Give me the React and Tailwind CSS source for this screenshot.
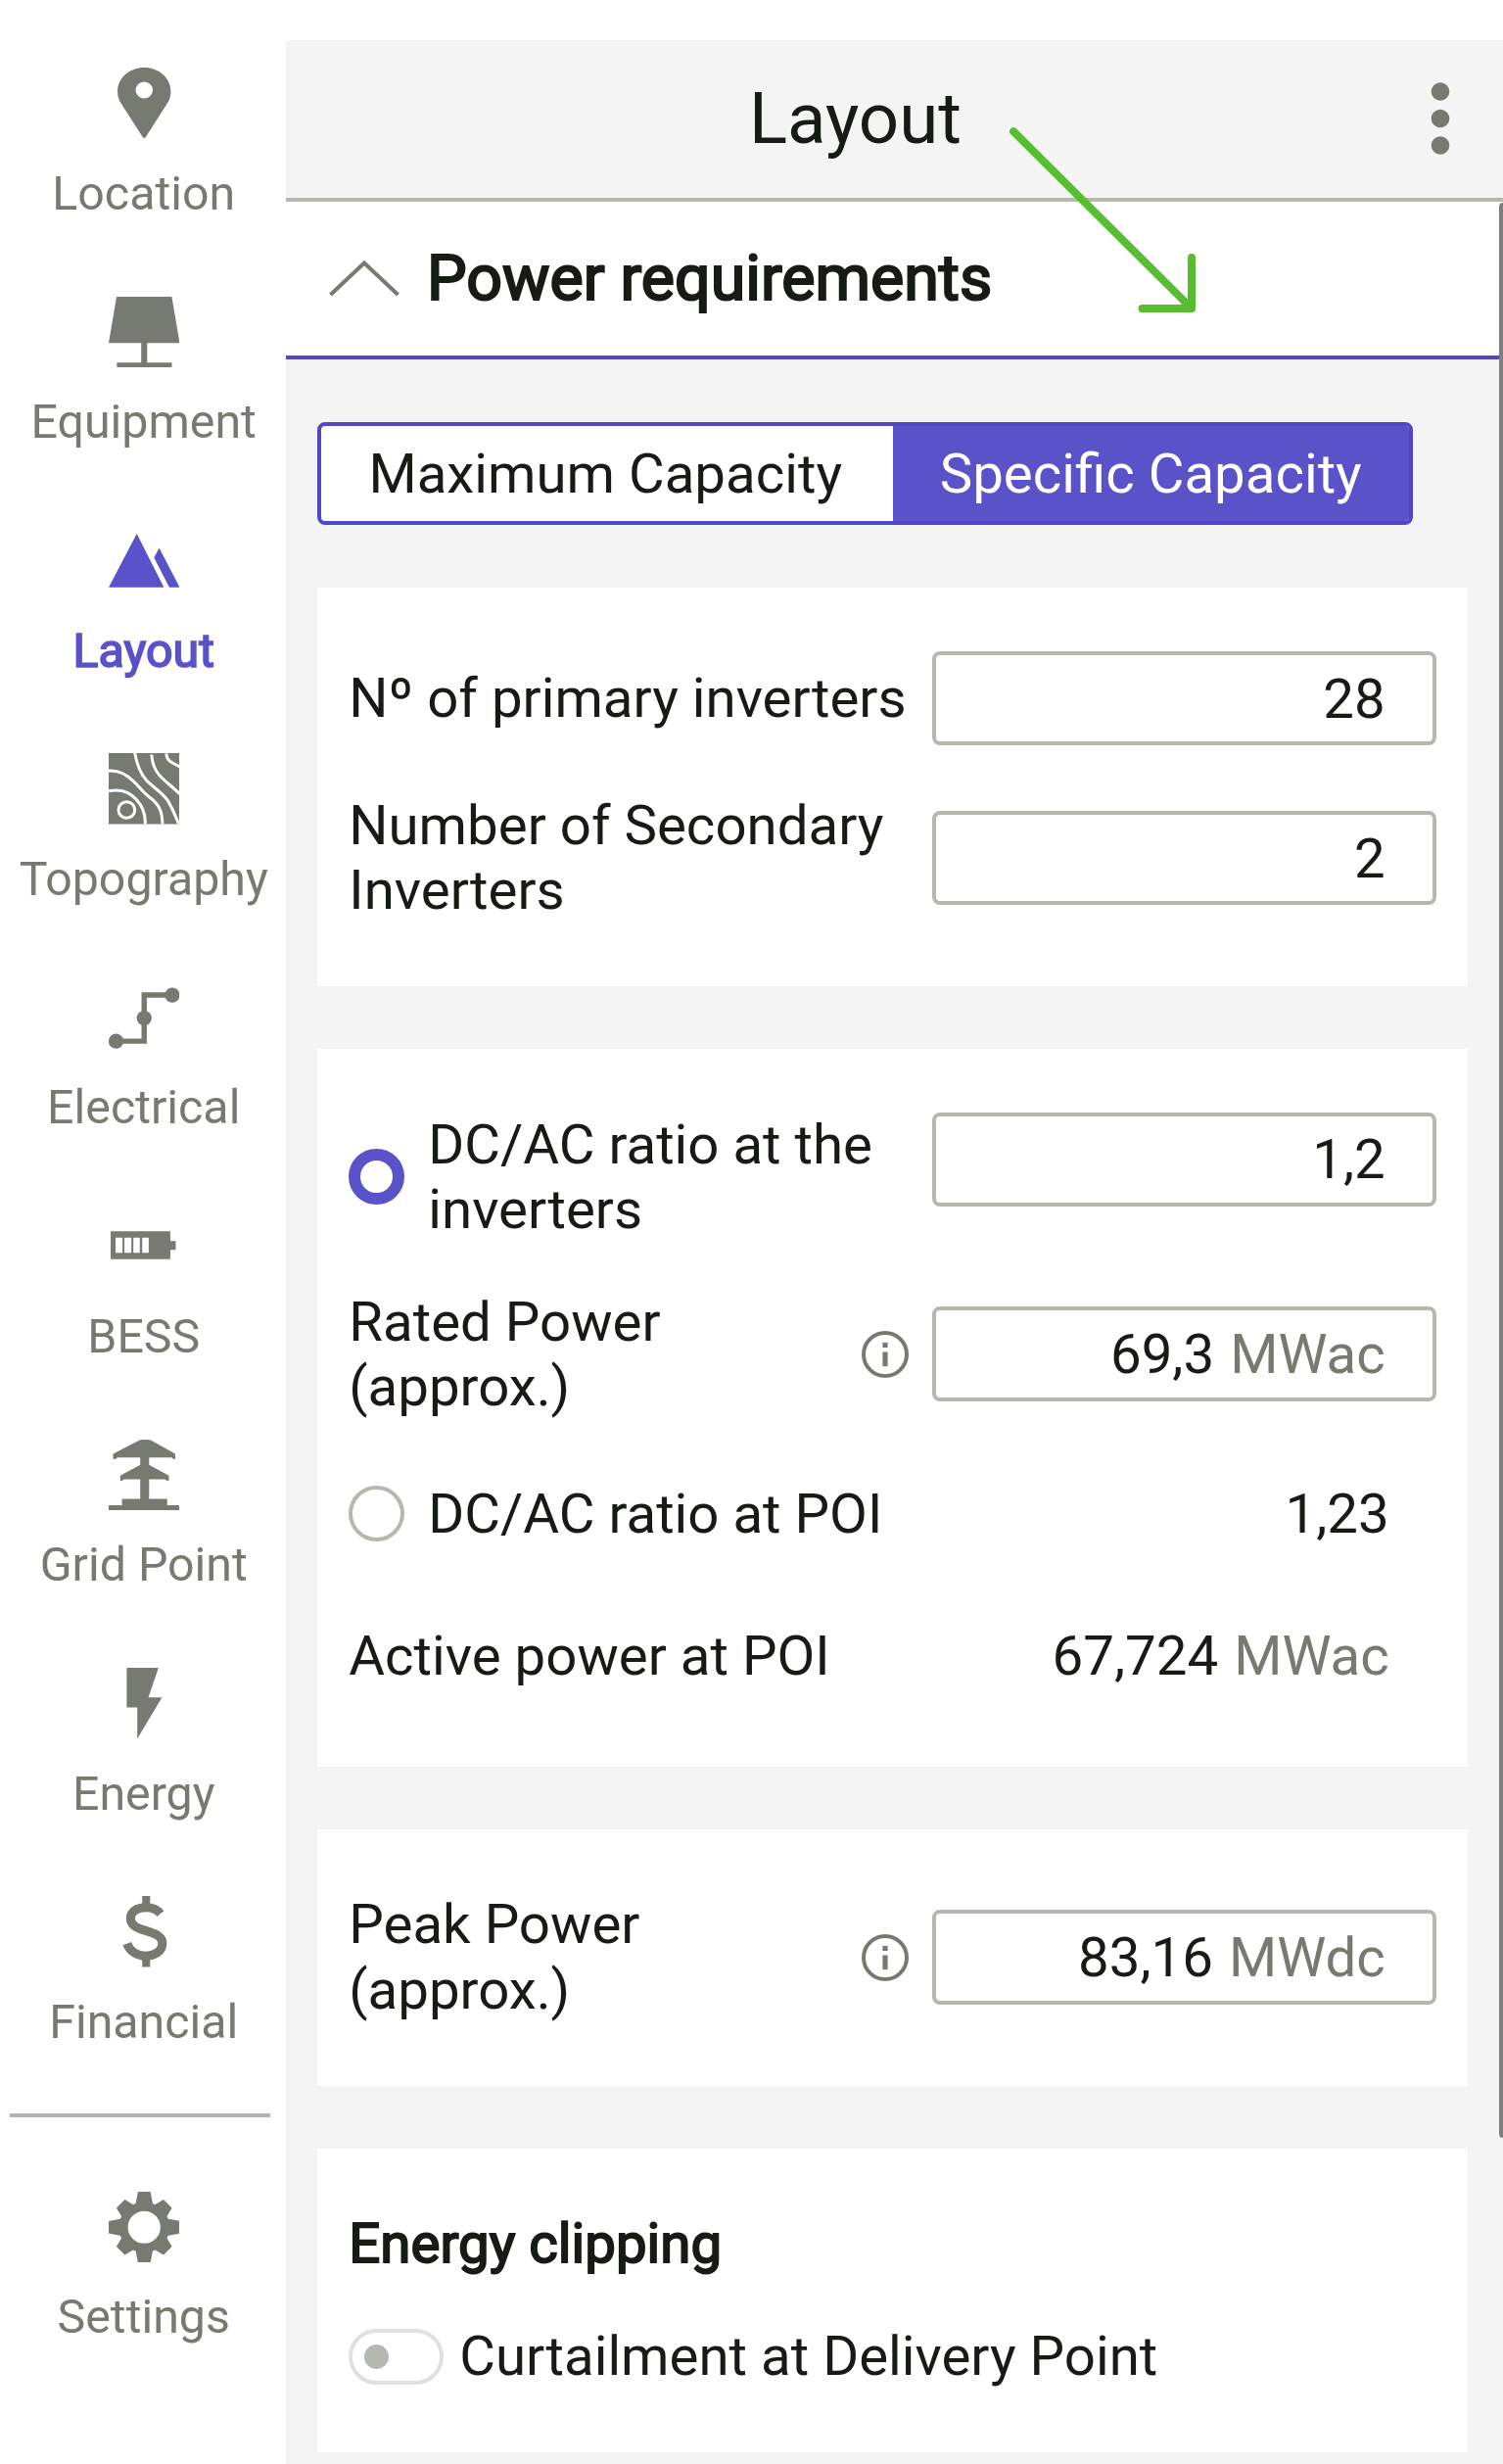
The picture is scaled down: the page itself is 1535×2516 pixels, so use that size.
const Icon = ({ children }) => (
  <svg viewBox="0 0 72 72" className="w-[72.5px] h-[72.5px] shrink-0" fill="currentColor">
    {children}
  </svg>
)

const PinIcon = () => (
  <Icon>
    <path fillRule="evenodd" d="M36 0C21 0 9 10.6 9 24.3c0 4.9 1.3 8.5 3.7 12.2L34.3 70.2q1.7 2.6 3.4 0L59.3 36.5C61.7 32.8 63 29.2 63 24.3 63 10.6 51 0 36 0zM36 14.3a8.7 8.5 0 1 1 0 17a8.7 8.5 0 1 1 0-17z" />
  </Icon>
)

const PanelIcon = () => (
  <Icon>
    <path d="M8 0H64L72 47H39V66.7H64V72H8.3V66.7H33V47H0z" />
  </Icon>
)

const MountainIcon = () => (
  <Icon>
    <path d="M28.5 9L56 63.3H0zM51.2 23.3L72 63.3H61.5L46 33.3z" />
  </Icon>
)

const TopographyIcon = () => (
  <Icon>
    <rect width="72" height="72" />
    <g fill="none" stroke="#fff" strokeWidth="3">
      <path d="M26.5 0C28.5 11 32 21 39 28.5C46 35 54 40 59.5 47.5C64.5 55 67.5 64 71 71.5" />
      <path d="M43.5 1.5C44 10 46 16 51 22C57 29 65 34 72 41.5" />
      <path d="M58.5 .5C58.5 4 60 6.5 62.5 8.5C66 11 69 12 72 14" />
      <path d="M0 18C10 17 18 21.5 25 28.5C31 34 35 40 41 44.5C50 51 54.5 58 54.5 72" />
      <path d="M0 38.5C12 36 21 39 28 47C34.5 54 37.5 62 37 72" />
      <circle cx="18.2" cy="57.6" r="8.3" />
    </g>
  </Icon>
)

const CircuitIcon = () => (
  <Icon>
    <path d="M7.5 59.7H36V13H64.5" fill="none" stroke="currentColor" strokeWidth="5.4" />
    <circle cx="64.5" cy="13" r="7.6" />
    <circle cx="36" cy="36.3" r="7.6" />
    <circle cx="7.5" cy="59.7" r="7.6" />
  </Icon>
)

const BatteryIcon = () => (
  <Icon>
    <path d="M2 21H62.5V31H68V40H62.5V49.5H2z" />
    <path fill="#fff" d="M7 27.5h7v15.5h-7zM16 27.5h7v15.5h-7zM25 27.5h6.6v15.5h-6.6zM34 27.5h6.6v15.5h-6.6z" />
  </Icon>
)

const PylonIcon = () => (
  <Icon>
    <path d="M31.5 .6Q36-.8 42.5 .6L67.5 14.5V19.5Q65.5 20.5 64 18H41V25.5L61 36.5V41.5Q59 42.5 57.3 40.3H41V60H59.3V66.5H72V72H0V66.5H13.5V60H32V40.3H15.5Q13.5 42.5 11.7 41.5V36.5L32 25.5V18H9Q7 20.5 4.5 19.5V14.5z" />
  </Icon>
)

const BoltIcon = () => (
  <Icon>
    <path d="M18.3 0H50.5L40.3 30H54L29 72V40.3H18.3z" />
  </Icon>
)

const DollarIcon = () => (
  <Icon>
    <path d="M34 0h8v11h-8zM34 61h8v11h-8z" />
    <path
      d="M52.5 18C49 13.5 43.5 11.7 38 11.7C28.5 11.7 22.2 16 22.2 22.5C22.2 29.5 28 32.2 37.5 35.2C48 38.5 54.5 41 54.5 48C54.5 56 46.5 60.8 37.5 60.8C28.5 60.8 21.5 56 18.6 48.3"
      fill="none" stroke="currentColor" strokeWidth="9"
    />
  </Icon>
)

const GearIcon = () => (
  <Icon>
    <circle cx="36" cy="36" r="21" fill="none" stroke="currentColor" strokeWidth="9" />
    {[0, 90, 180, 270].map(a => (
      <path key={a} d="M29.7 0H42.3L45 14H27z" transform={`rotate(${a} 36 36)`} />
    ))}
    {[45, 135, 225, 315].map(a => (
      <path key={a} d="M30 2.2H42L45 14H27z" transform={`rotate(${a} 36 36)`} />
    ))}
  </Icon>
)

const InfoIcon = () => (
  <svg viewBox="0 0 48 48" className="w-[48px] h-[48px] shrink-0 text-[#767a70]" fill="currentColor">
    <circle cx="24" cy="24" r="22" fill="none" stroke="currentColor" strokeWidth="4" />
    <rect x="21.4" y="12" width="5.2" height="5" />
    <rect x="21.4" y="21.5" width="5.2" height="14.5" />
  </svg>
)

const navItems = [
  { label: 'Location', icon: PinIcon },
  { label: 'Equipment', icon: PanelIcon },
  { label: 'Layout', icon: MountainIcon, active: true },
  { label: 'Topography', icon: TopographyIcon },
  { label: 'Electrical', icon: CircuitIcon },
  { label: 'BESS', icon: BatteryIcon },
  { label: 'Grid Point', icon: PylonIcon },
  { label: 'Energy', icon: BoltIcon },
  { label: 'Financial', icon: DollarIcon },
]

const NavItem = ({ label, icon: NavIcon, active }) => (
  <a className={`flex flex-col items-center gap-[28px] whitespace-nowrap text-[48.3px] leading-[56.8px] ${active ? 'text-[#5a52c8] [-webkit-text-stroke:1.7px_#5a52c8]' : 'text-[#767a70]'}`}>
    <NavIcon />
    {label}
  </a>
)

const Card = ({ children }) => (
  <section className="flex flex-col gap-[48.4px] bg-white px-[32.3px] py-[64.5px]">{children}</section>
)

const Row = ({ label, info, top, children }) => (
  <div className={`flex justify-between ${top ? 'items-start' : 'items-center'}`}>
    <div className="whitespace-nowrap">{label}</div>
    <div className="flex items-center gap-[24.5px]">
      {info && <InfoIcon />}
      {children}
    </div>
  </div>
)

const Field = ({ value, unit }) => (
  <div className="flex h-[96.7px] w-[514.5px] items-center justify-end gap-[16px] rounded-[8px] border-4 border-[#b4b9af] bg-white pt-[1.5px] pr-[48px]">
    {value}
    {unit && <span className="text-[#767a70]">{unit}</span>}
  </div>
)

const Value = ({ value, unit }) => (
  <div className="flex h-[96.7px] items-center gap-[16px] pt-px pr-[48px]">
    {value}
    {unit && <span className="text-[#767a70]">{unit}</span>}
  </div>
)

const Radio = ({ checked, children }) => (
  <label className="flex items-center gap-[24px]">
    <span className={`h-[57px] w-[57px] shrink-0 rounded-full bg-white ${checked ? 'border-[12px] border-[#5a52c8]' : 'border-4 border-[#b4b9af]'}`} />
    <span>{children}</span>
  </label>
)

export default function App() {
  return (
    <div className="relative flex h-[2516px] w-[1535px] overflow-hidden bg-white pt-[41px] font-[Roboto,sans-serif] text-[56.4px] leading-[66.3px] text-[#171b15]">
      <nav className="flex w-[292px] shrink-0 flex-col pt-[28.3px] pl-[1.5px]">
        <div className="flex flex-col gap-[76.1px]">
          {navItems.map(item => <NavItem key={item.label} {...item} />)}
        </div>
        <hr className="mt-[64px] mb-[76px] ml-[8.5px] w-[265.5px] border-t-4 border-[#b1b6ab]" />
        <NavItem label="Settings" icon={GearIcon} />
      </nav>

      <main className="flex min-w-0 flex-1 flex-col bg-[#f4f4f4]">
        <header className="flex h-[164.7px] shrink-0 items-center border-b-4 border-[#b4b9af] pr-[46px]">
          <h1 className="flex-1 pl-[2px] text-center text-[72.6px] leading-[85px]">Layout</h1>
          <svg viewBox="0 0 36 76" className="h-[76px] w-[36px] fill-[#767a70]">
            <circle cx="18" cy="10.5" r="9.3" />
            <circle cx="18" cy="38" r="9.3" />
            <circle cx="18" cy="65.5" r="9.3" />
          </svg>
        </header>

        <div className="flex h-[161px] shrink-0 items-center gap-[28px] border-b-4 border-[#4f46c8] bg-white pl-[44px]">
          <svg viewBox="0 0 72 38" className="h-[38px] w-[72px]" fill="none" stroke="#767a70" strokeWidth="4">
            <path d="M1.5 36L36 3.5L70.5 36" />
          </svg>
          <h2 className="pt-[2px] text-[64.5px] leading-[75.6px] [-webkit-text-stroke:2.2px_#171b15]">Power requirements</h2>
        </div>

        <div className="flex flex-col gap-[64.2px] py-[64.5px] pr-[36px] pl-[32px]">
          <div className="flex h-[104.8px] w-[1119px] overflow-hidden rounded-[8px] border-4 border-[#5047c8] bg-white">
            <button className="w-[583.5px] pt-[1.5px] pr-[3px]">Maximum Capacity</button>
            <button className="flex-1 bg-[#5a52c8] pt-[1.5px] text-white">Specific Capacity</button>
          </div>

          <Card>
            <Row label="Nº of primary inverters"><Field value="28" /></Row>
            <Row label={<>Number of Secondary<br />Inverters</>}><Field value="2" /></Row>
          </Card>

          <Card>
            <Row top label={<Radio checked>DC/AC ratio at the<br />inverters</Radio>}><Field value="1,2" /></Row>
            <Row info label={<>Rated Power<br />(approx.)</>}><Field value="69,3" unit="MWac" /></Row>
            <Row label={<Radio>DC/AC ratio at POI</Radio>}><Value value="1,23" /></Row>
            <Row label="Active power at POI"><Value value="67,724" unit="MWac" /></Row>
          </Card>

          <Card>
            <Row info label={<>Peak Power<br />(approx.)</>}><Field value="83,16" unit="MWdc" /></Row>
          </Card>

          <Card>
            <h3 className="[-webkit-text-stroke:1.9px_#171b15]">Energy clipping</h3>
            <div className="flex items-center gap-[16px]">
              <span className="flex h-[57px] w-[97px] items-center rounded-full border-4 border-[#dfe1dd] pl-[12px]">
                <span className="h-[25px] w-[25px] rounded-full bg-[#b4b9af]" />
              </span>
              Curtailment at Delivery Point
            </div>
          </Card>
        </div>
      </main>

      {/* scrollbar thumb */}
      <div className="absolute top-[207px] right-0 h-[1976px] w-[4px] rounded-l-[4px] bg-[#7f7f7f]" />

      {/* pointer arrow */}
      <svg viewBox="0 0 192 190" className="absolute top-[130px] left-[1030px] h-[190px] w-[192px]" fill="none" stroke="#56be30" strokeWidth="8" strokeLinecap="round" strokeLinejoin="round">
        <path d="M5 4.2L187 185M187 133V185H136.5" />
      </svg>
    </div>
  )
}
